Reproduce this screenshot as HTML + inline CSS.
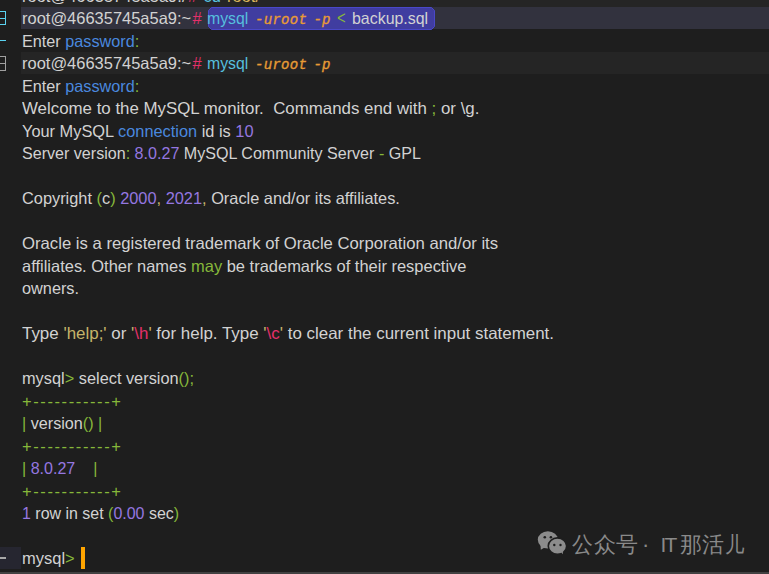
<!DOCTYPE html>
<html><head><meta charset="utf-8">
<style>
html,body{margin:0;padding:0;}
body{width:769px;height:574px;overflow:hidden;background:#1e1e1e;position:relative;font-family:"Liberation Sans",sans-serif;font-size:16.5px;color:#d2d2d2;}
.band{position:absolute;left:21px;right:0;}
.l,.s{position:absolute;left:22px;height:22.5px;line-height:22.5px;white-space:pre;transform-origin:0 0;}
.b{color:#4a88de}
.n{color:#9577e0}
.g{color:#86b83a}
.y{color:#c5b46a}
.y2{color:#d8b45a}
.r{color:#e3306a}
.c{color:#56bfdd}
.o{color:#e89b35;font-family:"Liberation Mono",monospace;font-style:italic;font-size:14px;-webkit-text-stroke:0.35px #e89b35}
.gut{position:absolute;}
.wm{position:absolute;top:529.5px;font-size:22px;line-height:30px;color:#8a8a8a;white-space:pre}
</style></head><body>
<div class="band" style="top:-15px;height:22px;background:#252525"></div>
<div class="band" style="top:7px;height:22px;background:#32323e"></div>
<div class="band" style="top:52px;height:22px;background:#252525"></div>

<div class="gut" style="left:-9px;top:11px;width:13px;height:12px;border:1px solid #5ad2f0"></div>
<div class="gut" style="left:0;top:18px;width:5px;height:1px;background:#5ad2f0"></div>
<div class="gut" style="left:0;top:40px;width:6px;height:1px;background:#5ad2f0"></div>
<div class="gut" style="left:-9px;top:56px;width:13px;height:13px;border:1px solid #a0a0a0"></div>
<div class="gut" style="left:0;top:63px;width:5px;height:1px;background:#a0a0a0"></div>
<div class="gut" style="left:0;top:547px;width:21px;height:22px;background:#262630"></div>
<div class="gut" style="left:0;top:557px;width:6px;height:2px;background:#a8a8a8"></div>

<svg class="gut" style="left:207.5px;top:6.5px" width="227" height="23" viewBox="0 0 227 23"><polygon points="3.5,0.5 223.5,0.5 226.5,3.5 226.5,19.5 223.5,22.5 3.5,22.5 0.5,19.5 0.5,3.5" fill="#403da0" stroke="#4a48c8" stroke-width="1"/></svg>
<div class="s" style="left:22px;top:-15.5px;">root@46635745a5a9:/</div>
<div class="s r" style="left:188px;top:-15.5px;">#</div>
<div class="s c" style="left:203.5px;top:-15.5px;">cd</div>
<div class="s y2" style="left:227px;top:-15.5px;">root/</div>
<div class="s" style="left:22px;top:7.0px;transform:scaleX(0.998);">root@46635745a5a9:~</div>
<div class="s r" style="left:192.5px;top:7.0px;">#</div>
<div class="s c" style="left:207px;top:7.0px;transform:scaleX(0.96);">mysql</div>
<div class="s o" style="left:255px;top:7.0px;margin-top:1.7px;letter-spacing:0.3px;">-uroot</div>
<div class="s o" style="left:313.5px;top:7.0px;margin-top:1.7px;">-p</div>
<div class="s g" style="left:336.5px;top:7.0px;transform:scaleX(0.85);font-size:17.5px;margin-top:-0.5px;">&lt;</div>
<div class="s" style="left:352px;top:7.0px;transform:scaleX(0.965);">backup.sql</div>
<div class="l" id="L2" style="top:29.5px;transform:scaleX(0.983);"><span class="t">Enter <span class="b">password</span><span class="g">:</span></span></div>
<div class="s" style="left:22px;top:52.0px;transform:scaleX(0.998);">root@46635745a5a9:~</div>
<div class="s r" style="left:192.5px;top:52.0px;">#</div>
<div class="s c" style="left:207px;top:52.0px;transform:scaleX(0.96);">mysql</div>
<div class="s o" style="left:255px;top:52.0px;margin-top:1.7px;letter-spacing:0.3px;">-uroot</div>
<div class="s o" style="left:313.5px;top:52.0px;margin-top:1.7px;">-p</div>
<div class="l" id="L4" style="top:74.5px;transform:scaleX(0.983);"><span class="t">Enter <span class="b">password</span><span class="g">:</span></span></div>
<div class="l" id="L5" style="top:97.0px;transform:scaleX(1.022);"><span class="t">Welcome to the MySQL monitor.  Commands end with <span class="g">;</span> or \g.</span></div>
<div class="l" id="L6" style="top:119.5px;transform:scaleX(0.991);"><span class="t">Your MySQL <span class="b">connection</span> id is <span class="n">10</span></span></div>
<div class="l" id="L7" style="top:142.0px;transform:scaleX(0.9745);"><span class="t">Server version<span class="g">:</span> <span class="n">8.0.27</span> MySQL Community Server <span class="g">-</span> GPL</span></div>
<div class="l" id="L9" style="top:187.0px;transform:scaleX(0.991);"><span class="t">Copyright <span class="g">(</span>c<span class="g">)</span> <span class="n">2000</span><span class="y">,</span> <span class="n">2021</span><span class="y">,</span> Oracle and/or its affiliates.</span></div>
<div class="l" id="L11" style="top:232.0px;transform:scaleX(1.012);"><span class="t">Oracle is a registered trademark of Oracle Corporation and/or its</span></div>
<div class="l" id="L12" style="top:254.5px;transform:scaleX(0.998);"><span class="t">affiliates. Other names <span class="g">may</span> be trademarks of their respective</span></div>
<div class="l" id="L13" style="top:277.0px;transform:scaleX(0.987);"><span class="t">owners.</span></div>
<div class="l" id="L15" style="top:322.0px;transform:scaleX(1.026);"><span class="t">Type <span class="y">'help;'</span> or <span class="y">'</span><span class="r">\h</span><span class="y">'</span> for help. Type <span class="y">'</span><span class="r">\c</span><span class="y">'</span> to clear the current input statement.</span></div>
<div class="l" id="L17" style="top:367.0px;transform:scaleX(0.99);"><span class="t">mysql<span class="g">&gt;</span> select version<span class="g">();</span></span></div>
<div class="l" id="L18" style="top:389.5px;letter-spacing:1.6px;"><span class="t"><span class="g">+-----------+</span></span></div>
<div class="l" id="L19" style="top:412.0px;transform:scaleX(0.98);"><span class="t"><span class="g">|</span> version<span class="g">()</span> <span class="g">|</span></span></div>
<div class="l" id="L20" style="top:434.5px;letter-spacing:1.6px;"><span class="t"><span class="g">+-----------+</span></span></div>
<div class="l" id="L21" style="top:457.0px;transform:scaleX(0.973);"><span class="t"><span class="g">|</span> <span class="n">8.0.27</span>    <span class="g">|</span></span></div>
<div class="l" id="L22" style="top:479.5px;letter-spacing:1.6px;"><span class="t"><span class="g">+-----------+</span></span></div>
<div class="l" id="L23" style="top:502.0px;transform:scaleX(0.9675);"><span class="t"><span class="n">1</span> row in set <span class="g">(</span><span class="n">0.00</span> sec<span class="g">)</span></span></div>
<div class="l" id="L25" style="top:547.0px;"><span class="t">mysql<span class="g">&gt;</span></span></div>
<div class="gut" style="left:81px;top:547px;width:4px;height:22px;background:#ffa500"></div>
<div class="gut" style="left:0;top:572px;width:769px;height:2px;background:#414141"></div>
<div class="gut" style="left:536px;top:530px;width:32px;height:26px;">
<svg width="32" height="26" viewBox="0 0 32 26"><ellipse cx="11.9" cy="9.8" rx="10.1" ry="8.6" fill="#8c8c8c"/><path d="M4.5 15 L4.8 19.8 L9.5 17 Z" fill="#8c8c8c"/><circle cx="8.8" cy="7.2" r="1.3" fill="#1e1e1e"/><circle cx="14.9" cy="7.2" r="1.3" fill="#1e1e1e"/><ellipse cx="21.45" cy="16.1" rx="9.2" ry="8.2" fill="#8c8c8c" stroke="#1e1e1e" stroke-width="1.6"/><path d="M24 21 L26.8 24.2 L27 20 Z" fill="#8c8c8c"/><circle cx="18.3" cy="15" r="1.2" fill="#1e1e1e"/><circle cx="24.5" cy="15" r="1.2" fill="#1e1e1e"/></svg>
</div>
<div class="wm" style="left:572px;transform:scaleX(0.95);transform-origin:0 0">公</div><div class="wm" style="left:594px">众</div><div class="wm" style="left:615.8px">号</div><div class="wm" style="left:642px">·</div><div class="wm" style="left:660.5px;font-size:21px">I</div><div class="wm" style="left:664.5px;font-size:21px">T</div><div class="wm" style="left:679.9px">那</div><div class="wm" style="left:702px">活</div><div class="wm" style="left:724.5px;transform:scaleX(0.88);transform-origin:0 0">儿</div>

</body></html>
